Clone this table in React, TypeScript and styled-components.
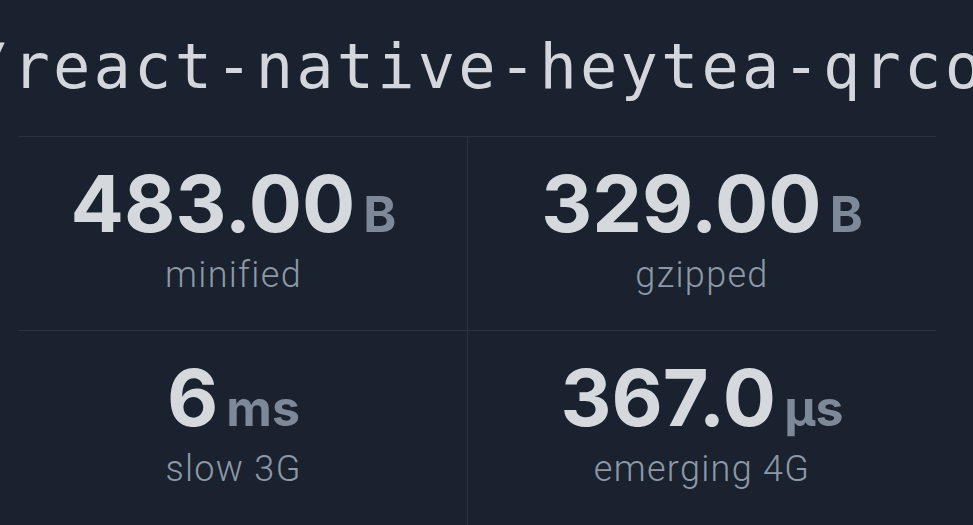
import React from "react";
import styled, { createGlobalStyle } from "styled-components";

const GlobalStyle = createGlobalStyle`
  html, body {
    margin: 0;
    padding: 0;
    background: #19222e;
    overflow: hidden;
  }
  body {
    font-family: Inter, "Liberation Sans", sans-serif;
  }
`;

const Page = styled.div`
  width: 973px;
  height: 525px;
  overflow: hidden;
  background: #19222e;
`;

const Title = styled.h1`
  margin: 0 0 0 -28px;
  padding-top: 36px;
  height: 100px;
  box-sizing: border-box;
  font-family: "DejaVu Sans Mono", "Liberation Mono", monospace;
  font-weight: 400;
  font-size: 62px;
  line-height: 1;
  letter-spacing: 3.2px;
  color: #d3d7dd;
  white-space: nowrap;
`;

const StatsGrid = styled.div`
  margin: 36px 0 0 19px;
  width: 917px;
  display: grid;
  grid-template-columns: 449px 468px;
  border-top: 1px solid #2a3441;
`;

const Cell = styled.div<{ $left?: boolean; $top?: boolean }>`
  display: flex;
  flex-direction: column;
  align-items: center;
  padding: 27px ${(p) => (p.$left ? "19px" : "0")} 40px 0;
  height: 194px;
  box-sizing: border-box;
  border-right: ${(p) => (p.$left ? "1px solid #2a3441" : "none")};
  border-bottom: ${(p) => (p.$top ? "1px solid #2a3441" : "none")};
`;

const Value = styled.div`
  display: flex;
  align-items: baseline;
  line-height: 1;
`;

const Number = styled.span`
  font-family: Inter, "Liberation Sans", sans-serif;
  font-weight: 700;
  font-size: 79px;
  color: #d5d9de;
`;

const Unit = styled.span`
  font-family: Inter, "Liberation Sans", sans-serif;
  font-weight: 700;
  font-size: 50px;
  color: #7d8899;
  margin-left: 8px;
`;

const Label = styled.div`
  margin-top: 14px;
  font-family: Roboto, Inter, "Liberation Sans", sans-serif;
  font-weight: 300;
  font-size: 36px;
  line-height: 1;
  letter-spacing: 1.3px;
  color: #8e98a6;
`;

const stats = [
  { value: "483.00", unit: "B", label: "minified" },
  { value: "329.00", unit: "B", label: "gzipped" },
  { value: "6", unit: "ms", label: "slow 3G" },
  { value: "367.0", unit: "µs", label: "emerging 4G" },
];

export default function App() {
  return (
    <Page>
      <GlobalStyle />
      <Title>/react-native-heytea-qrcode</Title>
      <StatsGrid>
        {stats.map((s, i) => (
          <Cell key={s.label} $left={i % 2 === 0} $top={i < 2}>
            <Value>
              <Number>{s.value}</Number>
              <Unit>{s.unit}</Unit>
            </Value>
            <Label>{s.label}</Label>
          </Cell>
        ))}
      </StatsGrid>
    </Page>
  );
}
